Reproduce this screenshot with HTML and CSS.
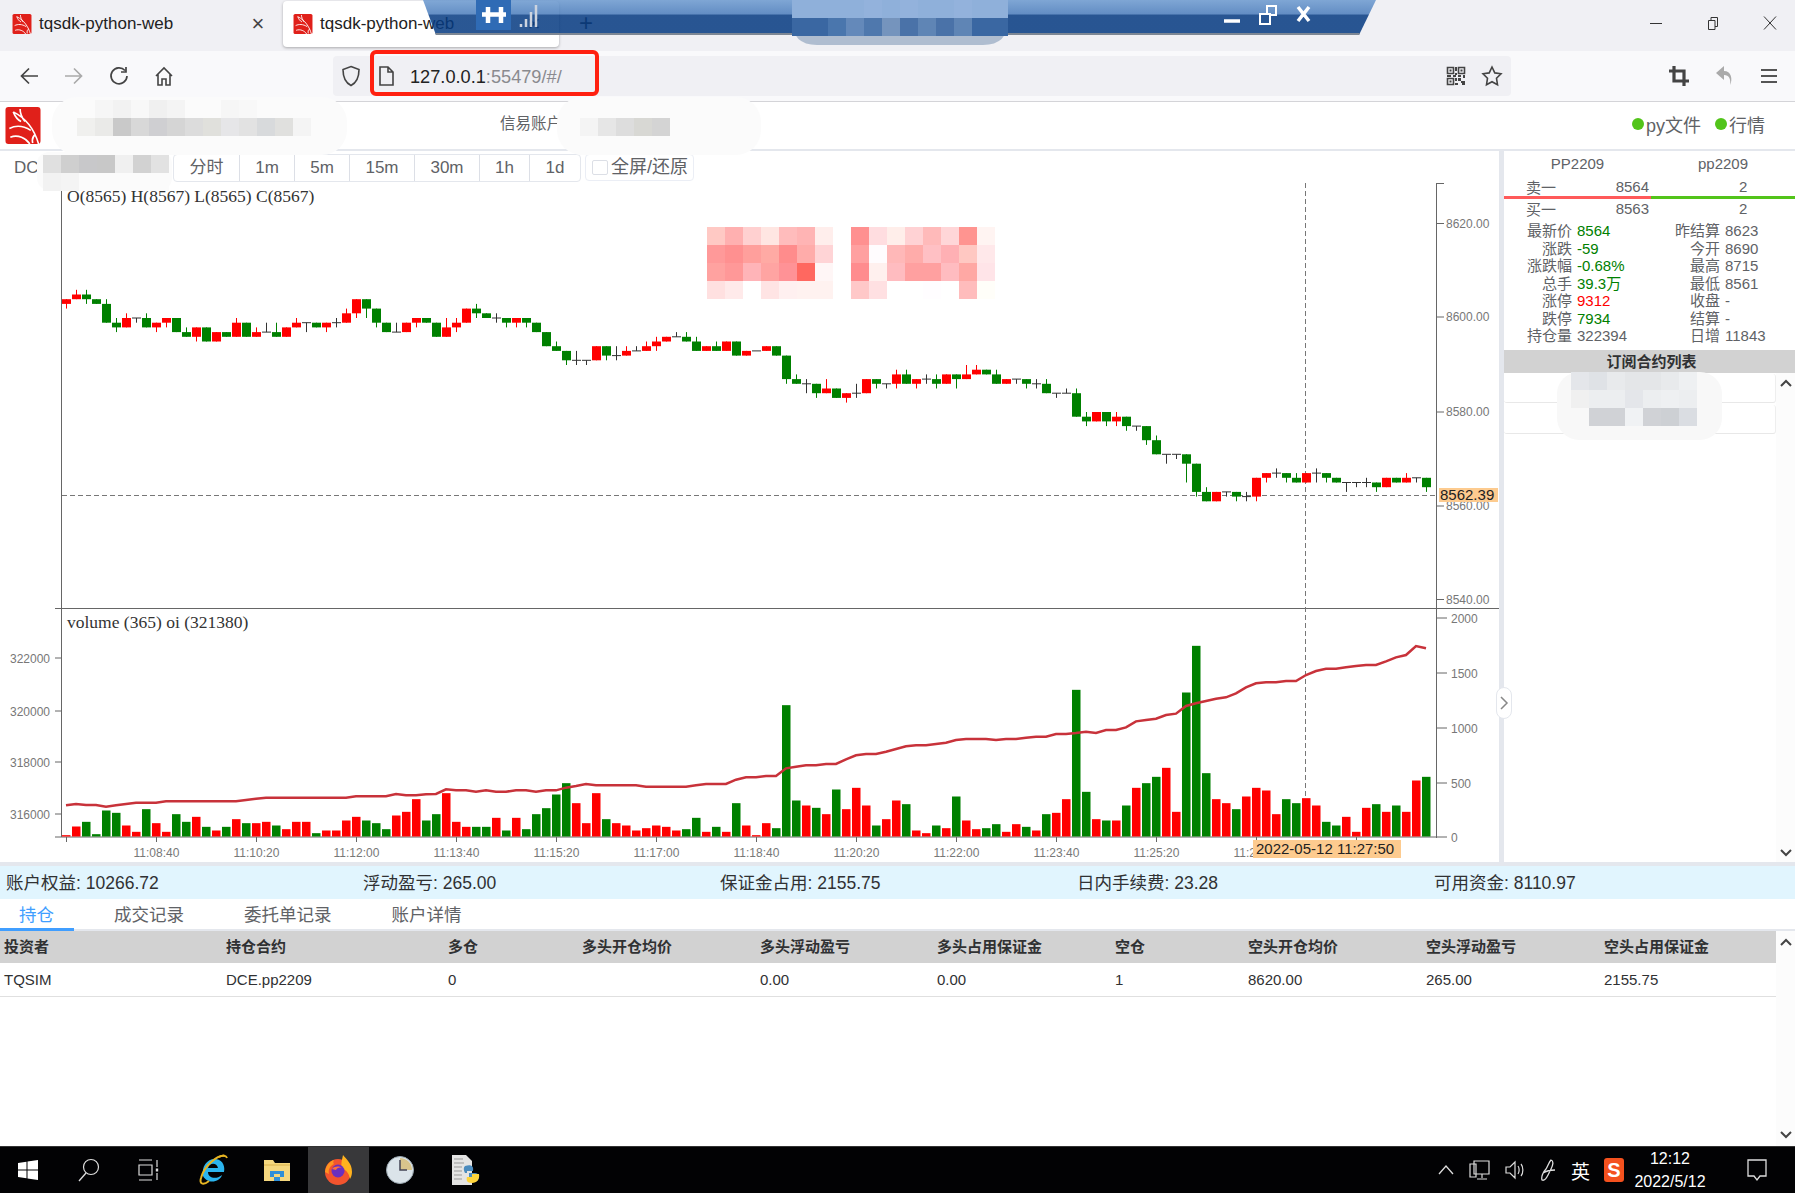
FILE: index.html
```html
<!DOCTYPE html>
<html lang="zh-CN">
<head>
    <meta charset="UTF-8">
    <title>tqsdk-python-web</title>
    <link rel="stylesheet" href="styles.css">
</head>
<body>

    <svg class="defs" width="0" height="0">
        <symbol id="tq-logo" viewBox="0 0 36 38">
            <rect width="36" height="38" rx="3" fill="#e0201a"/>
            <path d="M34 38C30 24 22 12 8 5M8 5C10 10 12 13 16 15M26 24C18 19 10 19 4 22M20 15C17 11 15 6 15 2M25 38C21 32 13 28 5 31M31 28C28 30 27 33 28 37" fill="none" stroke="#fff" stroke-width="1.700"/>
        </symbol>
    </svg>

    <div class="tabbar">
        <div class="tab">
            <svg class="favicon"><use href="#tq-logo"/></svg>
            <span class="tab-title">tqsdk-python-web</span>
            <span class="tab-close">×</span>
        </div>
        <div class="tab active">
            <svg class="favicon"><use href="#tq-logo"/></svg>
            <span class="tab-title">tqsdk-python-web</span>
            <span class="tab-close">×</span>
        </div>
        <span class="tab-new">+</span>
        <div class="win-controls">
            <svg width="20" height="20" viewBox="0 0 20 20"><path d="M4 10.500h12" stroke="#333" fill="none"/></svg>
            <svg width="20" height="20" viewBox="0 0 20 20"><path d="M5.500 7.500h6.500v9h-6.500zM8 7.500v-3h6.500v9h-2.500" stroke="#333" fill="none"/></svg>
            <svg width="20" height="20" viewBox="0 0 20 20"><path d="M4 3.500l12 13M16 3.500l-12 13" stroke="#333" fill="none"/></svg>
        </div>
    </div>

    <div class="toolbar">
        <div class="nav-icons">
            <svg width="22" height="22" viewBox="0 0 22 22"><path d="M20 11H4M11 3.500L3.500 11l7.500 7.500" fill="none" stroke="#444" stroke-width="1.700"/></svg>
            <svg width="22" height="22" viewBox="0 0 22 22"><path d="M2 11h16M11 3.500l7.500 7.500-7.500 7.500" fill="none" stroke="#aaa" stroke-width="1.700"/></svg>
            <svg width="22" height="22" viewBox="0 0 22 22"><path d="M17 5.500A8 8 0 1 0 19 11M18 2v5h-5" fill="none" stroke="#444" stroke-width="1.700"/></svg>
            <svg width="22" height="22" viewBox="0 0 22 22"><path d="M3 11L11 3l8 8M5 9.500V20h4v-6h4v6h4V9.500" fill="none" stroke="#444" stroke-width="1.600"/></svg>
        </div>
        <div class="urlbar">
            <svg class="shield" width="20" height="22" viewBox="0 0 20 22"><path d="M10 1.500l8 3c0 8-2 13-8 16-6-3-8-8-8-16z" fill="none" stroke="#444" stroke-width="1.600"/></svg>
            <svg class="page" width="18" height="20" viewBox="0 0 18 20"><path d="M3 1h8l5 5v13H3zM11 1v5h5" fill="none" stroke="#444" stroke-width="1.600"/></svg>
            <span class="url">127.0.0.1<span class="url-rest">:55479/#/</span></span>
            <svg class="qr" width="20" height="20" viewBox="0 0 20 20"><path d="M1.500 1.500h6v6h-6zM12.500 1.500h6v6h-6zM1.500 12.500h6v6h-6z" fill="none" stroke="#444" stroke-width="1.600"/><path d="M3.500 3.500h2v2h-2zM14.500 3.500h2v2h-2zM3.500 14.500h2v2h-2zM9 1h2v4H9zM9 7h2v2H9zM1 9h4v2H1zM7 9h3v2H7zM12 9h3v2h-3zM17 9h2v3h-2zM9 12h2v3H9zM12 12h3v3h-3zM9 17h3v2H9zM15 15h4v2h-4zM16 17h3v2h-3z" fill="#444"/></svg>
            <svg class="star" width="22" height="22" viewBox="0 0 22 22"><path d="M11 2l2.800 5.900 6.200.9-4.500 4.500 1 6.400-5.500-3-5.500 3 1-6.400L2 8.800l6.200-.9z" fill="none" stroke="#444" stroke-width="1.600"/></svg>
        </div>
        <div class="tool-icons">
            <svg width="22" height="22" viewBox="0 0 22 22"><path d="M6 1v15h15M1 6h15v15" fill="none" stroke="#444" stroke-width="3.200"/></svg>
            <svg width="22" height="22" viewBox="0 0 22 22"><path d="M17 20c1-6-1-10-6-10V15L3 8l8-7v5c7 0 9 8 6 14z" fill="#aaa"/></svg>
            <svg width="22" height="22" viewBox="0 0 22 22"><path d="M3 5h16M3 11h16M3 17h16" fill="none" stroke="#555" stroke-width="1.900"/></svg>
        </div>
    </div>

    <div class="app-header">
        <svg class="app-logo"><use href="#tq-logo"/></svg>
        <span class="account-name">信易账户</span>
        <div class="status">
            <span class="dot"></span>py文件
            <span class="dot second"></span>行情
        </div>
    </div>

    <div class="main">
        <div class="chart-col">
            <div class="chart-toolbar">
                <span class="symbol">DC</span>
                <div class="period-group">
                    <span class="period wide">分时</span>
                    <span class="period">1m</span>
                    <span class="period">5m</span>
                    <span class="period mid">15m</span>
                    <span class="period mid">30m</span>
                    <span class="period small">1h</span>
                    <span class="period small">1d</span>
                </div>
                <label class="fullscreen"><span class="checkbox"></span>全屏/还原</label>
            </div>
            <svg id="chart" class="chart" viewBox="0 183 1499 679" width="1499" height="679"></svg>
        </div>

        <div class="side">
            <div class="quote-head"><span>PP2209</span><span>pp2209</span></div>
            <div class="depth-row"><span class="depth-name">卖一</span><span class="depth-price">8564</span><span class="depth-vol">2</span></div>
            <div class="depth-bar"><i class="bar-red"></i><i class="bar-green"></i></div>
            <div class="depth-row"><span class="depth-name">买一</span><span class="depth-price">8563</span><span class="depth-vol">2</span></div>
            <div class="stats">
                <span class="lbl">最新价</span><span class="down">8564</span><span class="lbl">昨结算</span><span>8623</span>
                <span class="lbl">涨跌</span><span class="down">-59</span><span class="lbl">今开</span><span>8690</span>
                <span class="lbl">涨跌幅</span><span class="down">-0.68%</span><span class="lbl">最高</span><span>8715</span>
                <span class="lbl">总手</span><span class="down">39.3万</span><span class="lbl">最低</span><span>8561</span>
                <span class="lbl">涨停</span><span class="up">9312</span><span class="lbl">收盘</span><span>-</span>
                <span class="lbl">跌停</span><span class="down">7934</span><span class="lbl">结算</span><span>-</span>
                <span class="lbl">持仓量</span><span>322394</span><span class="lbl">日增</span><span>11843</span>
            </div>
            <div class="sub-title">订阅合约列表</div>
            <div class="sub-body">
                <div class="sub-list">
                    <div class="sub-item"></div>
                    <div class="sub-item"></div>
                </div>
                <div class="fake-scroll">
                    <svg width="14" height="10" viewBox="0 0 14 10"><path d="M2 8l5-5 5 5" fill="none" stroke="#444" stroke-width="2"/></svg>
                    <svg width="14" height="10" viewBox="0 0 14 10"><path d="M2 2l5 5 5-5" fill="none" stroke="#444" stroke-width="2"/></svg>
                </div>
            </div>
        </div>
    </div>

    <div class="account-bar">
        <span>账户权益: 10266.72</span>
        <span>浮动盈亏: 265.00</span>
        <span>保证金占用: 2155.75</span>
        <span>日内手续费: 23.28</span>
        <span>可用资金: 8110.97</span>
    </div>

    <div class="tabs">
        <span class="tabs-item active">持仓</span>
        <span class="tabs-item">成交记录</span>
        <span class="tabs-item">委托单记录</span>
        <span class="tabs-item">账户详情</span>
    </div>

    <div class="positions">
        <table class="pos-table">
            <colgroup>
                <col class="c222"><col class="c222"><col class="c134"><col class="c178"><col class="c177">
                <col class="c178"><col class="c133"><col class="c178"><col class="c178"><col>
            </colgroup>
            <thead>
                <tr>
                    <th>投资者</th><th>持仓合约</th><th>多仓</th><th>多头开仓均价</th><th>多头浮动盈亏</th>
                    <th>多头占用保证金</th><th>空仓</th><th>空头开仓均价</th><th>空头浮动盈亏</th><th>空头占用保证金</th>
                </tr>
            </thead>
            <tbody>
                <tr>
                    <td>TQSIM</td><td>DCE.pp2209</td><td>0</td><td></td><td>0.00</td>
                    <td>0.00</td><td>1</td><td>8620.00</td><td>265.00</td><td>2155.75</td>
                </tr>
            </tbody>
        </table>
        <div class="fake-scroll">
            <svg width="14" height="10" viewBox="0 0 14 10"><path d="M2 8l5-5 5 5" fill="none" stroke="#444" stroke-width="2"/></svg>
            <svg width="14" height="10" viewBox="0 0 14 10"><path d="M2 2l5 5 5-5" fill="none" stroke="#444" stroke-width="2"/></svg>
        </div>
    </div>

    <div class="taskbar">
        <div class="task-left">
            <span class="task-icon">
                <svg width="22" height="22" viewBox="0 0 22 22"><path d="M1 4l8.500-1.200v7.700H1zM10.500 2.600L21 1v9.500H10.500zM1 11.500h8.500v7.700L1 18zM10.500 11.500H21V21l-10.500-1.500z" fill="#fff"/></svg>
            </span>
            <span class="task-icon">
                <svg width="24" height="26" viewBox="0 0 24 26"><circle cx="14" cy="10" r="7.500" fill="none" stroke="#ddd" stroke-width="1.200"/><path d="M9 16l-7 8" stroke="#ddd" stroke-width="1.300"/></svg>
            </span>
            <span class="task-icon">
                <svg width="22" height="22" viewBox="0 0 22 22"><path d="M1 1h13M1 21h13M1 6h13v10H1zM19 1v7M19 14v7" fill="none" stroke="#ddd" stroke-width="1.200"/><path d="M17.800 9.500h2.400v3h-2.400z" fill="#ddd"/></svg>
            </span>
            <span class="task-icon">
                <svg width="30" height="32" viewBox="0 0 30 32"><path d="M5 22C3 12 10 4 18 5c8 1 9 9 8 13H10c0 6 8 8 14 3-2 7-14 10-19 1zM10 14h10c-1-5-8-6-10 0z" fill="#2bb4ee"/><path d="M27 2C20 0 6 12 3 24c-2 7 3 7 8 3" fill="none" stroke="#e6b422" stroke-width="2"/><path d="M21 3c4-2 7-2 8 1" fill="none" stroke="#e6b422" stroke-width="2"/></svg>
            </span>
            <span class="task-icon">
                <svg width="28" height="26" viewBox="0 0 28 26"><path d="M1 3h9l2 3h15v18H1z" fill="#f5d77e"/><path d="M1 8h26" stroke="#d9b24c"/><path d="M7 14h14v6h-4v-3h-6v3H7z" fill="#2f8fd8"/><path d="M11 20h6v4h-6z" fill="#2f8fd8"/></svg>
            </span>
            <span class="task-icon firefox">
                <svg width="30" height="32" viewBox="0 0 30 32"><circle cx="15" cy="18" r="13" fill="#f2542e"/><path d="M20 1c3 4 9 8 9 17 0 3-1 5-2 7-1-6-4-9-7-10-3-3-1-9 0-14z" fill="#ffb21e"/><path d="M2 18C3 11 7 7 11 6c-1 2-1 3 0 4-4 2-6 5-5 10z" fill="#ff9420"/><circle cx="15" cy="17" r="6.500" fill="#6b2fbf"/><path d="M9 15c3-3 7-3 10-1-3-1-5 0-6 2z" fill="#ff7139"/></svg>
            </span>
            <span class="task-icon">
                <svg width="30" height="30" viewBox="0 0 30 30"><circle cx="15" cy="15" r="13.500" fill="#dbe4ea" stroke="#9aa7b0"/><path d="M15 3a12 12 0 0 1 12 12H15z" fill="#d8c48c"/><path d="M15 5v10h7" fill="none" stroke="#445" stroke-width="1.500"/></svg>
            </span>
            <span class="task-icon">
                <svg width="30" height="32" viewBox="0 0 30 32"><path d="M2 1h14l6 6v24H2z" fill="#e4e4e4"/><path d="M4 5h9M4 9h10M4 13h8M4 17h8M4 21h8M4 25h8" stroke="#999"/><path d="M15 12c6-2 9 0 8 5h-6v2h8c2 0 4 1 4 4s-3 5-6 5v-4h-4v-5h-4c-2-4-1-6 0-7z" fill="#4b8bbe"/><path d="M22 20h7c1 5-2 9-7 9s-6-3-5-6h5z" fill="#ffd43b"/></svg>
            </span>
        </div>
        <div class="task-right">
            <svg width="18" height="12" viewBox="0 0 18 12"><path d="M2 10l7-8 7 8" fill="none" stroke="#ddd" stroke-width="1.300"/></svg>
            <svg width="22" height="22" viewBox="0 0 22 22"><path d="M5 2h15v13H5zM1 5h6v13H1zM13 15v4M8 20h10" fill="none" stroke="#ddd" stroke-width="1.200"/></svg>
            <svg width="20" height="22" viewBox="0 0 20 22"><path d="M1 8h4l5-5v16l-5-5H1zM13 7c1.500 2 1.500 6 0 8M16 5c2.500 3 2.500 9 0 12" fill="none" stroke="#ddd" stroke-width="1.200"/></svg>
            <svg width="18" height="24" viewBox="0 0 18 24"><path d="M12 2c3 1 2 5 0 9l-3 6c-2 4-4 6-6 5-1-3 1-8 4-11 2-3 3-7 5-9zM4 15c3-2 8-3 12-3" fill="none" stroke="#ddd" stroke-width="1.300"/></svg>
            <span class="ime">英</span>
            <span class="sogou">S</span>
            <div class="clock"><span>12:12</span><span>2022/5/12</span></div>
            <svg class="notify" width="22" height="24" viewBox="0 0 22 24"><path d="M2 2h18v16h-6l-3 4-3-4H2z" fill="none" stroke="#ddd" stroke-width="1.300"/></svg>
        </div>
    </div>

    <!-- over the page: the remote-desktop strip and the censored parts -->
    <svg class="vnc" viewBox="0 0 960 48" width="960" height="48">
        <defs>
            <linearGradient id="vnc-fill" x1="0" y1="0" x2="0" y2="1">
                <stop offset="0" stop-color="#6b99cf"/>
                <stop offset="0.4" stop-color="#4a7cbb"/>
                <stop offset="0.43" stop-color="#053a81"/>
                <stop offset="1" stop-color="#053a81"/>
            </linearGradient>
        </defs>
        <path d="M3 0H956L939 35H16z" fill="url(#vnc-fill)" fill-opacity="0.85"/>
        <path d="M16 35H939L940 33H15z" fill="#7d8794"/>
        <rect x="56" y="0" width="35" height="30" fill="#2f6bb5"/>
        <path d="M68 7v16M81 7v16M68 14.500h13M62 14.500h6M81 14.500h5" stroke="#fff" stroke-width="4.500" fill="none"/>
        <path d="M101 24v3M106 19v8M111 12v15M116 5v22" stroke="#ccd4e0" stroke-width="2.500" fill="none"/>
        <path d="M804 21h16" stroke="#fff" stroke-width="3.500"/>
        <path d="M840 14h10v10h-10zM847 14V6h9v9h-6" fill="none" stroke="#fff" stroke-width="2"/>
        <path d="M878 7l11 14M889 7l-11 14" stroke="#fff" stroke-width="3.500"/>
    </svg>
    <svg id="patches" class="patches" width="1795" height="1193"></svg>
    <div class="url-mark"></div>
    <div class="collapse-handle">
        <svg width="10" height="16" viewBox="0 0 10 16"><path d="M2 2l6 6-6 6" fill="none" stroke="#888" stroke-width="1.500"/></svg>
    </div>

    <script src="chart.js"></script>
</body>
</html>
```

FILE: styles.css
```css
* {
    margin: 0;
    padding: 0;
    box-sizing: border-box;
}

body {
    width: 1795px;
    height: 1193px;
    overflow: hidden;
    position: relative;
    display: flex;
    flex-direction: column;
    background: #fff;
    color: #606266;
    font-family: "Liberation Sans", "Noto Sans CJK SC", sans-serif;
}

.defs {
    position: absolute;
}

/* browser chrome */
.tabbar {
    height: 51px;
    flex: none;
    display: flex;
    align-items: flex-start;
    background: #f0f0f4;
}

.tab {
    width: 283px;
    height: 46px;
    margin-top: 1px;
    padding: 0 15px 0 12px;
    display: flex;
    align-items: center;
    font-size: 17px;
    color: #222;
}

.tab.active {
    width: 276px;
    padding-left: 10px;
    background: #fff;
    border-radius: 4px;
    box-shadow: 0 1px 3px rgba(0, 0, 0, 0.3);
}

.favicon {
    width: 20px;
    height: 20px;
    margin-right: 7px;
}

.tab-title {
    flex: 1;
    white-space: nowrap;
}

.tab-close {
    font-size: 22px;
    color: #444;
    width: 20px;
    text-align: center;
}

.tab-new {
    margin: 9px 0 0 20px;
    font-size: 24px;
    color: #333;
}

.win-controls {
    margin-left: auto;
    margin-top: 13px;
    padding-right: 15px;
    display: flex;
    gap: 37px;
}

.toolbar {
    height: 51px;
    flex: none;
    display: flex;
    align-items: center;
    background: #f9f9fb;
    border-bottom: 1px solid #d4d4d8;
}

.nav-icons {
    width: 333px;
    padding-left: 18px;
    display: flex;
    gap: 23px;
}

.urlbar {
    width: 1178px;
    height: 40px;
    display: flex;
    align-items: center;
    padding: 0 8px;
    background: #f0f0f4;
    border-radius: 4px;
}

.shield {
    margin-right: 16px;
}

.url {
    margin: 2px 0 0 15px;
    font-size: 18.200px;
    color: #222;
}

.url-rest {
    color: #8a8a8f;
}

.qr {
    margin-left: auto;
    margin-right: 15px;
}

.tool-icons {
    margin-left: 157px;
    display: flex;
    gap: 23px;
}

/* app */
.app-header {
    height: 49px;
    flex: none;
    display: flex;
    align-items: center;
    padding-left: 5px;
    border-bottom: 2px solid #e4e7ed;
}

.app-logo {
    width: 36px;
    height: 37px;
}

.account-name {
    margin: 0 0 7px 459px;
    font-size: 15.500px;
}

.status {
    margin: 0 0 4px auto;
    padding-right: 30px;
    display: flex;
    align-items: center;
    font-size: 18px;
}

.dot {
    width: 12px;
    height: 12px;
    margin-right: 2px;
    border-radius: 50%;
    background: #52c41a;
}

.dot.second {
    margin-left: 14px;
}

.main {
    height: 711px;
    flex: none;
    display: flex;
}

.chart-col {
    width: 1499px;
    flex: none;
}

.chart-toolbar {
    height: 32px;
    display: flex;
    align-items: flex-start;
    padding-top: 3px;
}

.symbol {
    width: 173px;
    padding-left: 14px;
    font-size: 17px;
    line-height: 28px;
}

.period-group {
    display: flex;
    height: 28px;
    border: 1px solid #e4e7ed;
    border-radius: 4px;
}

.period {
    width: 55px;
    font-size: 17px;
    line-height: 26px;
    text-align: center;
    border-right: 1px solid #dcdfe6;
}

.period.wide {
    width: 66px;
}

.period.mid {
    width: 65px;
}

.period.small {
    width: 50px;
}

.period:last-child {
    border-right: none;
}

.fullscreen {
    width: 109px;
    height: 27px;
    margin-left: 4px;
    display: flex;
    align-items: center;
    padding: 0 0 5px 6px;
    font-size: 18px;
    white-space: nowrap;
    border: 1px solid #ebeef5;
    border-radius: 4px;
}

.checkbox {
    width: 16px;
    height: 15px;
    margin: 4px 3px 0 0;
    border: 1px solid #dcdfe6;
    border-radius: 2px;
}

.chart {
    display: block;
}

.chart text {
    font-family: "Liberation Sans", sans-serif;
    font-size: 12px;
    fill: #777;
}

.chart text.legend {
    font-family: "Liberation Serif", serif;
    font-size: 17.500px;
    fill: #333;
}

.chart text.tag {
    font-size: 15px;
    fill: #222;
}

.chart text.time-tag {
    font-size: 15px;
    fill: #222;
}

.side {
    flex: 1;
    display: flex;
    flex-direction: column;
    border-left: 5px solid #e4e7ed;
    font-size: 15px;
}

.quote-head {
    height: 25px;
    display: grid;
    grid-template-columns: 147px 1fr;
    align-items: center;
    text-align: center;
}

.depth-row {
    height: 20px;
    display: grid;
    grid-template-columns: 147px 1fr;
    position: relative;
    align-items: center;
}

.depth-bar + .depth-row {
    height: 18px;
}

.depth-name {
    position: absolute;
    left: 22px;
}

.depth-price {
    text-align: right;
    padding-right: 2px;
}

.depth-vol {
    padding-left: 88px;
}

.depth-bar {
    height: 3px;
    display: flex;
}

.bar-red {
    width: 147px;
    background: #ff5a5a;
}

.bar-green {
    flex: 1;
    background: #52c41a;
}

.stats {
    margin-top: 5px;
    display: grid;
    grid-template-columns: 68px 83px 55px 1fr;
    column-gap: 5px;
    grid-auto-rows: 17.500px;
    line-height: 17.500px;
}

.lbl {
    text-align: right;
    white-space: nowrap;
}

.down {
    color: #008000;
}

.up {
    color: #ff0000;
}

.sub-title {
    height: 23px;
    margin-top: 5px;
    padding-left: 4px;
    background: #d2d2d2;
    color: #303133;
    font-weight: bold;
    line-height: 23px;
    text-align: center;
}

.sub-body {
    flex: 1;
    display: flex;
}

.sub-list {
    flex: 1;
    padding-top: 1px;
}

.sub-item {
    height: 29px;
    margin-bottom: 2px;
    border-bottom: 1px solid #e8e8e8;
    border-right: 1px solid #eee;
    border-radius: 3px;
}

.fake-scroll {
    width: 19px;
    flex: none;
    display: flex;
    flex-direction: column;
    justify-content: space-between;
    align-items: center;
    padding: 6px 0;
    background: #fcfcfc;
}

.sub-body .fake-scroll {
    padding: 5px 0 4px;
}

.account-bar {
    height: 37px;
    flex: none;
    display: grid;
    grid-template-columns: repeat(5, 357px);
    padding: 0 0 2px 6px;
    align-items: center;
    border-top: 4px solid #e4e7ed;
    background: #e1f5fe;
    color: #303133;
    font-size: 17.500px;
}

.tabs {
    height: 32px;
    flex: none;
    display: flex;
    border-bottom: 2px solid #e4e7ed;
    font-size: 17.500px;
}

.tabs-item {
    padding: 0 19px;
    margin-right: 22px;
    line-height: 33px;
    height: 32px;
}

.tabs-item.active {
    padding-right: 20px;
    color: #409eff;
    border-bottom: 3px solid #409eff;
    margin-right: 21px;
}

.positions {
    flex: 1;
    display: flex;
    min-height: 0;
}

.pos-table {
    flex: 1;
    height: 65px;
    table-layout: fixed;
    border-collapse: collapse;
    color: #303133;
    font-size: 15px;
    text-align: left;
}

.c222 { width: 222px; }
.c134 { width: 134px; }
.c133 { width: 133px; }
.c177 { width: 177px; }
.c178 { width: 178px; }

.pos-table th {
    height: 32px;
    padding: 0 0 4px 4px;
    background: #d2d2d2;
}

.pos-table td {
    height: 33px;
    padding: 0 0 0 4px;
    border-bottom: 1px solid #e0e0e0;
}

.taskbar {
    height: 47px;
    flex: none;
    display: flex;
    align-items: center;
    justify-content: space-between;
    background: #020204;
    border-top: 1px solid #333;
    color: #fff;
}

.task-left {
    display: flex;
    height: 100%;
}

.task-icon {
    width: 61.500px;
    display: flex;
    align-items: center;
    justify-content: center;
}

.task-icon:nth-child(1) svg { margin-right: 6px; }
.task-icon:nth-child(2) svg { margin-right: 6px; }
.task-icon:nth-child(3) svg { margin-right: 9px; }
.task-icon:nth-child(4) svg { margin-right: 4px; }
.task-icon:nth-child(8) svg { margin-left: 8px; }

.task-icon.firefox {
    background: #38383a;
}

.task-right {
    display: flex;
    align-items: center;
    gap: 14px;
    padding-right: 27px;
}

.ime {
    font-size: 19px;
}

.sogou {
    width: 20px;
    height: 24px;
    background: #f4511e;
    border-radius: 3px;
    color: #fff;
    font-weight: bold;
    font-size: 20px;
    line-height: 24px;
    text-align: center;
}

.clock {
    width: 80px;
    margin-left: -8px;
    display: flex;
    flex-direction: column;
    align-items: center;
    font-size: 16px;
    line-height: 23px;
    white-space: nowrap;
}

.notify {
    margin-left: 22px;
}

/* overlays */
.vnc {
    position: absolute;
    left: 420px;
    top: 0;
}

.patches {
    position: absolute;
    left: 0;
    top: 0;
    pointer-events: none;
}

.url-mark {
    position: absolute;
    left: 370px;
    top: 50px;
    width: 229px;
    height: 46px;
    border: 4px solid #ff2010;
    border-radius: 6px;
}

.collapse-handle {
    position: absolute;
    left: 1496px;
    top: 687px;
    width: 16px;
    height: 32px;
    display: flex;
    align-items: center;
    justify-content: center;
    background: #fff;
    border: 1px solid #e4e7ed;
    border-radius: 8px;
}
```

FILE: chart.js
```js
const NS = 'http://www.w3.org/2000/svg';

// open, high, low, close
const candles = [
    [8603,8604,8602,8604],[8604,8606,8604,8605],[8605,8606,8603,8604],[8604,8604,8603,8603],[8603,8604,8599,8599],
    [8599,8600,8597,8598],[8598,8601,8598,8600],[8600,8600,8599,8600],[8600,8601,8598,8598],[8598,8599,8597,8599],
    [8599,8600,8598,8600],[8600,8600,8597,8597],[8597,8598,8596,8596],[8596,8598,8595,8598],[8598,8598,8595,8595],
    [8595,8597,8595,8597],[8597,8597,8596,8596],[8596,8600,8596,8599],[8599,8599,8596,8596],[8596,8598,8596,8597],
    [8597,8599,8597,8597],[8597,8599,8596,8596],[8596,8598,8596,8598],[8598,8600,8598,8599],[8599,8599,8597,8599],
    [8599,8599,8598,8598],[8598,8599,8597,8599],[8599,8600,8598,8599],[8599,8602,8599,8601],[8601,8604,8600,8604],
    [8604,8604,8600,8602],[8602,8602,8598,8599],[8599,8599,8597,8597],[8597,8599,8597,8597],[8597,8599,8597,8599],
    [8599,8600,8598,8600],[8600,8600,8599,8599],[8599,8599,8596,8596],[8596,8600,8596,8598],[8598,8600,8597,8599],
    [8599,8602,8599,8602],[8602,8603,8600,8601],[8601,8601,8600,8600],[8600,8601,8599,8600],[8600,8600,8598,8599],
    [8599,8600,8598,8600],[8600,8600,8598,8599],[8599,8599,8597,8597],[8597,8597,8594,8594],[8594,8595,8593,8593],
    [8593,8593,8590,8591],[8591,8593,8590,8591],[8591,8591,8590,8591],[8591,8594,8591,8594],[8594,8594,8591,8592],
    [8592,8594,8591,8592],[8592,8594,8592,8593],[8593,8594,8593,8593],[8593,8595,8593,8594],[8594,8596,8593,8595],
    [8595,8596,8595,8596],[8596,8597,8596,8596],[8596,8597,8595,8595],[8595,8596,8593,8593],[8593,8594,8593,8594],
    [8594,8595,8593,8593],[8593,8595,8593,8595],[8595,8595,8592,8592],[8592,8593,8592,8593],[8593,8593,8593,8593],
    [8593,8594,8593,8594],[8594,8594,8592,8592],[8592,8592,8586,8587],[8587,8588,8586,8586],[8586,8587,8584,8586],
    [8586,8586,8583,8584],[8584,8587,8584,8585],[8585,8585,8583,8583],[8583,8584,8582,8584],[8584,8586,8583,8584],
    [8584,8587,8584,8587],[8587,8587,8585,8586],[8586,8586,8585,8586],[8586,8589,8585,8588],[8588,8589,8586,8586],
    [8586,8587,8585,8587],[8587,8588,8586,8587],[8587,8588,8585,8586],[8586,8588,8586,8588],[8588,8588,8585,8587],
    [8587,8590,8587,8588],[8588,8590,8588,8589],[8589,8589,8588,8588],[8588,8589,8586,8586],[8586,8587,8586,8587],
    [8587,8587,8586,8587],[8587,8587,8585,8586],[8586,8587,8585,8586],[8586,8587,8584,8584],[8584,8584,8583,8584],
    [8584,8585,8584,8584],[8584,8585,8579,8579],[8579,8580,8577,8578],[8578,8580,8578,8580],[8580,8580,8577,8578],
    [8578,8580,8577,8579],[8579,8579,8576,8577],[8577,8577,8576,8577],[8577,8577,8573,8574],[8574,8575,8571,8571],
    [8571,8571,8569,8571],[8571,8571,8570,8571],[8571,8571,8565,8569],[8569,8569,8562,8563],[8563,8564,8561,8561],
    [8561,8563,8561,8563],[8563,8563,8562,8563],[8563,8563,8561,8562],[8562,8563,8561,8562],[8562,8566,8561,8566],
    [8566,8567,8565,8567],[8567,8568,8566,8567],[8567,8567,8565,8566],[8566,8567,8565,8565],[8565,8567,8565,8567],
    [8567,8568,8565,8567],[8567,8567,8565,8566],[8566,8566,8565,8565],[8565,8565,8563,8565],[8565,8565,8564,8565],
    [8565,8566,8564,8565],[8565,8565,8563,8564],[8564,8566,8564,8566],[8566,8566,8565,8565],[8565,8567,8565,8566],
    [8566,8566,8565,8566],[8566,8566,8563,8564]
];

// bar heights and oi line, both in thirds of a pixel
const volumes = [
    4,30,44,7,78,71,33,14,82,40,14,67,44,59,29,18,29,52,40,40,44,33,22,44,44,10,18,18,48,59,
    48,40,22,63,74,112,48,67,130,44,29,29,29,56,18,56,22,67,85,126,160,100,40,130,52,40,33,18,25,33,
    29,18,22,56,14,29,14,100,33,4,40,25,394,108,93,86,67,141,82,146,93,33,52,108,97,18,10,33,25,120,
    48,22,25,37,14,37,29,18,67,71,112,440,134,52,48,48,93,146,160,179,206,74,432,572,190,112,100,82,120,146,
    138,67,112,100,115,93,44,33,59,14,86,97,74,93,74,168,179
];

const oiLine = [
    496,492,495,495,500,496,492,488,488,488,484,484,484,484,484,484,484,484,480,476,473,473,473,473,473,473,473,473,473,469,
    469,469,469,462,466,466,463,462,448,451,451,455,451,455,455,451,451,455,451,451,443,438,432,436,436,436,436,436,440,440,
    440,440,440,436,432,432,432,419,412,412,408,408,385,380,376,376,372,372,358,346,342,342,335,327,319,316,316,312,308,300,
    297,297,297,300,297,297,293,290,290,282,282,279,275,279,270,270,262,244,240,236,225,221,198,190,183,176,172,160,142,130,
    127,127,123,123,105,93,86,86,82,78,75,75,64,52,45,18,25
];

const RED = '#ff0000';
const GREEN = '#008000';
const chart = document.getElementById('chart');
const barX = i => 66 + i * 10;
const priceY = p => 506 - (p - 8560) * 4.7;

function add(parent, tag, attrs, text) {
    const el = document.createElementNS(NS, tag);
    for (const key in attrs) el.setAttribute(key, attrs[key]);
    if (text !== undefined) el.textContent = text;
    parent.appendChild(el);
    return el;
}

function line(x1, y1, x2, y2, stroke, extra) {
    return add(chart, 'line', Object.assign({ x1, y1, x2, y2, stroke, 'stroke-width': 1 }, extra));
}

function drawAxes() {
    const axis = '#666';
    line(61.5, 190, 61.5, 837, axis);
    line(1436.5, 183, 1436.5, 838, axis);
    line(55, 608.5, 1499, 608.5, axis);
    line(55, 837, 1437, 837, axis);
    line(1436, 183.5, 1444, 183.5, axis);

    [[8620, 223.5], [8600, 317], [8580, 412], [8560, 506], [8540, 599.5]].forEach(([p, y]) => {
        line(1436, y, 1444, y, axis);
        add(chart, 'text', { x: 1446, y: y + 4 }, p.toFixed(2));
    });
    [[2000, 618], [1500, 673], [1000, 728], [500, 783], [0, 837]].forEach(([v, y]) => {
        line(1436, y, 1447, y, axis);
        add(chart, 'text', { x: 1451, y: y + 5 }, v);
    });
    [[322000, 658], [320000, 711], [318000, 762], [316000, 814]].forEach(([v, y]) => {
        line(55, y, 62, y, axis);
        add(chart, 'text', { x: 50, y: y + 5, 'text-anchor': 'end' }, v);
    });

    line(66.5, 837, 66.5, 842, axis);
    const times = ['11:08:40', '11:10:20', '11:12:00', '11:13:40', '11:15:20', '11:17:00', '11:18:40', '11:20:20', '11:22:00', '11:23:40', '11:25:20', '11:27:00', '11:28:40'];
    times.forEach((t, i) => {
        const x = 156.5 + i * 100;
        line(x, 837, x, 842, axis);
        if (i < 12) add(chart, 'text', { x, y: 857, 'text-anchor': 'middle' }, t);
    });
}

function drawCrosshair() {
    const dash = { 'stroke-dasharray': '5 3' };
    line(62, 495.5, 1437, 495.5, '#777', dash);
    line(1305.5, 183, 1305.5, 836, '#777', dash);
}

function drawCandles() {
    candles.forEach(([o, h, l, c], i) => {
        const x = barX(i);
        const colour = c > o ? RED : c < o ? GREEN : '#333';
        line(x + 0.5, priceY(h), x + 0.5, priceY(l), colour);
        if (o === c) {
            line(x - 4, priceY(c), x + 5, priceY(c), colour);
        } else {
            const top = priceY(Math.max(o, c));
            add(chart, 'rect', { x: x - 4, y: top, width: 9, height: Math.abs(o - c) * 4.7, fill: colour });
        }
    });
}

function drawVolume() {
    volumes.forEach((h, i) => {
        const [o, , , c] = candles[i];
        const px = h / 3;
        add(chart, 'rect', { x: barX(i) - 4, y: 836.5 - px, width: 8.5, height: px, fill: c < o ? GREEN : RED });
    });
    const points = oiLine.map((y, i) => barX(i) + ',' + (640 + y / 3)).join(' ');
    add(chart, 'polyline', { points, fill: 'none', stroke: '#c8323a', 'stroke-width': 2.5 });
}

function drawLabels() {
    add(chart, 'text', { class: 'legend', x: 67, y: 202 }, 'O(8565) H(8567) L(8565) C(8567)');
    add(chart, 'text', { class: 'legend', x: 67, y: 628 }, 'volume (365) oi (321380)');
    add(chart, 'rect', { x: 1439, y: 488, width: 59, height: 14, fill: '#fdcb8f' });
    add(chart, 'text', { class: 'tag', x: 1440, y: 500 }, '8562.39');
    add(chart, 'rect', { x: 1253, y: 840, width: 148, height: 18, fill: '#fdcb8f' });
    add(chart, 'text', { class: 'time-tag', x: 1256, y: 854 }, '2022-05-12 11:27:50');
}

// censored areas of the screenshot: rounded blob plus a grid of mosaic cells
const patches = document.getElementById('patches');

function mosaic(x, y, cell, rows) {
    rows.forEach((row, r) => {
        row.split(' ').forEach((colour, c) => {
            if (colour !== '-') add(patches, 'rect', { x: x + c * cell, y: y + r * cell, width: cell, height: cell, fill: colour });
        });
    });
}

function blob(x, y, width, height, fill, rx) {
    add(patches, 'rect', { x, y, width, height, rx: rx || 25, fill });
}

function drawPatches() {
    // red blocks over the chart
    mosaic(707, 227, 18, [
        '#ffc9c4 #ffb0b0 #ffd0d0 #ffe6e2 #ffbcbc #ffb4b4 #ffeeec',
        '#ff9999 #ff9090 #ff9f9c #ffaaa4 #ff8c8c #ffacaa #ffd4d6',
        '#ffa2a0 #ff9898 #ffb4b8 #ffa4a2 #ff9296 #ff6860 #fff6f6',
        '#ffe0e0 #ffeaea - #ffe4e4 #fff0f0 #fff2f0 #fff2f0'
    ]);
    mosaic(851, 227, 18, [
        '#ff9090 #ffdde0 #ffeeea #ffd2d4 #ffbaba #ffd6d8 #ff9490 #fff4f2',
        '#ffa0a0 #fffcfe #ffb8b8 #ffacaa #ffc0c4 #ffb0b4 #ffc8c2 #ffe8ea',
        '#ff8c8e #fff0ee #ffbcc0 #ffa0a0 #ffa0a0 #ffbcc0 #ffa8a4 #ffe4e8',
        '#ffc8c8 #ffe0e2 - - #fffdff - #ffbcbc #fffef9'
    ]);

    // header: account name
    blob(52, 97, 295, 58, '#fbfbfb');
    mosaic(77, 100, 18, [
        '#fbfbfb #f6f6f6 #f2f2f2 #f8f8f8 #f0f0f0 #f4f4f4 #fbfbfb #fbfbfb #f6f6f6 #f8f8f8 #fbfbfb #fbfbfb #fbfbfb #fbfbfb',
        '#f0f0ee #eaeae8 #c9c9c9 #d8d8d8 #cfcfd2 #d5d5d5 #dcdcdc #e0e0dc #e6e6e8 #e2e2e2 #d8dadc #e0e0de #f4f4f4 #fbfbfb'
    ]);
    blob(557, 97, 204, 58, '#fbfbfb');
    mosaic(580, 118, 18, ['#f4f4f4 #e6e6e6 #dddddd #d8d8d4 #d4d4d4']);

    // chart toolbar: contract name
    blob(37, 152, 135, 38, '#fbfbfb', 12);
    mosaic(43, 155, 18, [
        '#e0e0e0 #cfcfcf #c8c8ca #c8c8c8 #f0f0f0 #d2d2d2 #e2e2e2',
        '#f2f2f2 #f4f4f4 #fbfbfb #fbfbfb #fbfbfb #fbfbfb #fbfbfb'
    ]);

    // side list
    blob(1557, 372, 165, 68, '#f8f8f8', 22);
    mosaic(1571, 372, 18, [
        '#e4e6ea #dfe2e6 #e8eaec #e4e6e8 #e4e6e8 #e8eaec #eef0f2',
        '#f0f0f0 #eceef0 #eceef0 #e4e6ea #eceef0 #eef0f2 #eceef0',
        '- #d0d2d6 #d0d2d6 #f0f2f4 #d0d2d6 #cdd0d4 #dadde2'
    ]);

    // remote-desktop title, over the blue strip
    add(patches, 'path', { d: 'M792 0H1008V20Q1008 45 983 45H817Q792 45 792 20Z', fill: '#afbdd0' });
    mosaic(792, 0, 18, [
        '#8fb0da #8fb0da #8fb0da #8fb0da #93b2dc #8fb0da #93b2dc #8fb0da #8fb0da #93b2dc #8fb0da #8fb0da',
        '#3a67a2 #3a67a2 #4a76ad #6489ba #4f78ad #7594bd #4a72a8 #5f85b5 #4a72a8 #5f85b5 #3a67a2 #3a67a2'
    ]);
}

drawAxes();
drawCrosshair();
drawCandles();
drawVolume();
drawLabels();
drawPatches();
```
